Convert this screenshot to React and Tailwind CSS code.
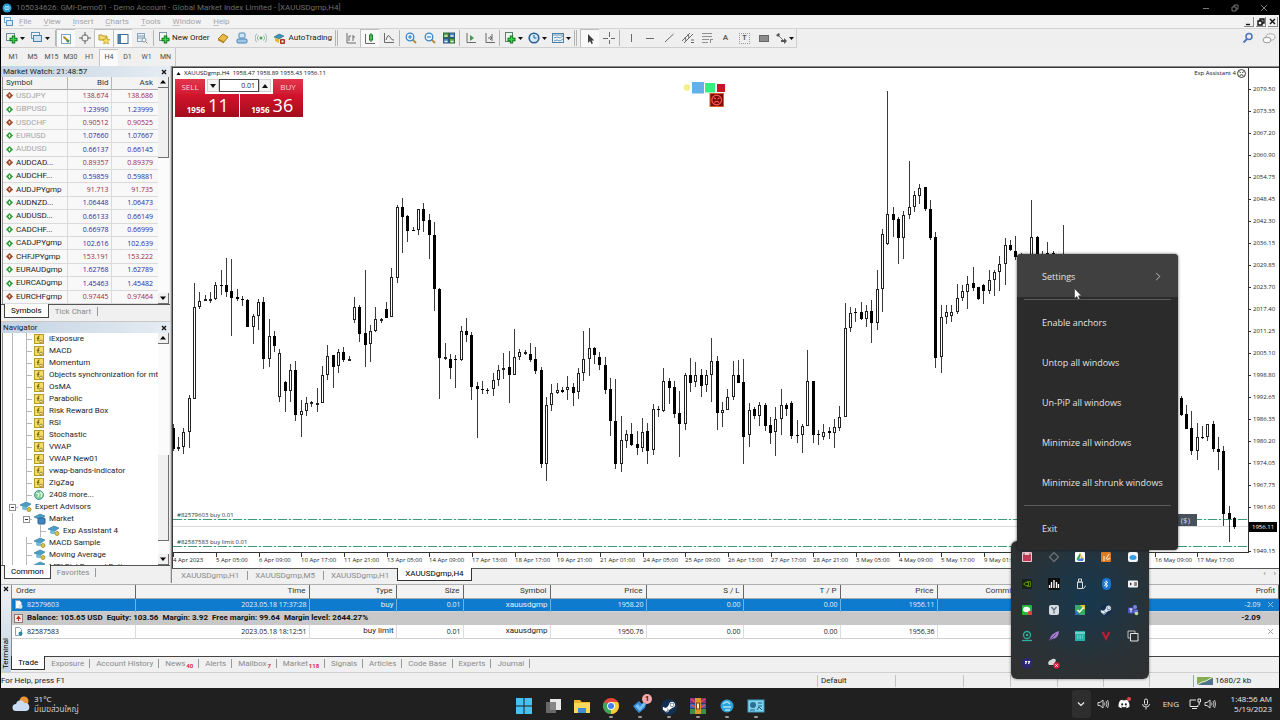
import React from "react";
import { FaDiscord, FaSteamSymbol, FaBluetoothB } from "react-icons/fa6";

/* ---------- chart data ---------- */

// [filled, high, body top, body bottom, low] in thirds of a pixel below each series' base
const SERIES = [
  {
    first: 0,
    base: 540,
    bars: [
      [1, 733, 745, 808, 812], [0, 772, 800, 808, 812], [0, 743, 757, 801, 821], [0, 646, 655, 757, 804],
      [0, 308, 381, 657, 657], [0, 336, 363, 382, 386], [0, 345, 356, 361, 364], [0, 336, 356, 361, 369],
      [0, 307, 316, 358, 360], [1, 271, 315, 317, 345], [1, 234, 315, 335, 350], [1, 238, 334, 353, 468],
      [1, 326, 351, 356, 362], [1, 348, 358, 361, 378], [1, 357, 360, 442, 442], [0, 402, 409, 440, 493],
      [0, 358, 367, 409, 450], [1, 351, 367, 537, 567], [0, 416, 469, 537, 562], [1, 453, 469, 497, 515],
      [0, 507, 519, 652, 665], [1, 604, 606, 633, 695], [0, 553, 569, 633, 665], [1, 542, 569, 704, 723],
      [0, 661, 692, 704, 771], [0, 650, 669, 693, 708], [0, 664, 667, 672, 680], [0, 624, 669, 673, 695],
      [0, 558, 585, 668, 670], [0, 496, 527, 586, 600], [1, 524, 526, 561, 624], [0, 506, 517, 559, 578],
      [1, 502, 516, 540, 545], [0, 529, 536, 542, 544], [0, 350, 381, 419, 429], [1, 374, 381, 461, 486],
      [1, 271, 460, 494, 562], [0, 434, 454, 493, 545], [0, 381, 416, 454, 456], [0, 413, 416, 421, 428],
      [1, 367, 387, 413, 414], [0, 263, 292, 412, 412], [0, 74, 81, 293, 309], [1, 55, 80, 111, 218],
      [1, 105, 108, 152, 186], [1, 142, 149, 152, 152], [0, 86, 88, 151, 166], [1, 69, 87, 122, 155],
      [1, 102, 120, 165, 237], [1, 126, 164, 326, 393], [1, 325, 326, 533, 656], [0, 490, 531, 535, 540],
      [1, 523, 537, 564, 596], [1, 524, 537, 541, 624], [0, 438, 454, 541, 543], [1, 414, 454, 465, 487],
      [1, 457, 464, 620, 659], [1, 606, 618, 626, 775], [1, 604, 627, 629, 641], [1, 625, 629, 633, 641],
      [0, 580, 601, 628, 647], [0, 556, 569, 601, 617], [0, 519, 563, 569, 597], [1, 512, 561, 586, 668],
      [0, 448, 532, 586, 586], [0, 506, 517, 532, 540], [0, 510, 517, 522, 526], [1, 488, 522, 540, 545],
      [1, 502, 538, 572, 582], [1, 560, 570, 852, 865], [0, 650, 676, 851, 904], [0, 613, 640, 676, 694],
      [0, 608, 630, 639, 643], [1, 620, 631, 635, 640],
    ],
  },
  {
    first: 74,
    base: 900,
    bars: [
      [0, 228, 261, 271, 299], [1, 249, 261, 278, 318], [0, 203, 220, 277, 297], [0, 94, 177, 220, 243],
      [0, 83, 145, 177, 228], [1, 142, 144, 165, 191], [1, 155, 171, 194, 210], [1, 170, 194, 269, 281],
      [1, 234, 267, 363, 407], [1, 236, 362, 491, 508], [0, 348, 421, 493, 517], [0, 390, 401, 422, 443],
      [1, 370, 402, 435, 437], [1, 394, 432, 443, 465], [0, 353, 395, 443, 455], [1, 370, 394, 452, 491],
      [0, 312, 328, 451, 465], [1, 318, 327, 330, 350], [0, 204, 244, 333, 336], [1, 234, 243, 263, 313],
      [1, 243, 262, 341, 353], [1, 272, 340, 371, 470], [0, 220, 226, 371, 391], [1, 174, 225, 248, 275],
      [0, 186, 226, 247, 260], [1, 207, 225, 258, 290], [0, 211, 226, 256, 275], [0, 114, 184, 226, 307],
      [1, 169, 182, 340, 391], [0, 305, 331, 340, 381], [0, 266, 292, 331, 331], [0, 183, 226, 292, 299],
      [1, 180, 225, 248, 249], [1, 178, 247, 410, 491], [0, 308, 331, 406, 441], [1, 322, 328, 348, 356],
      [0, 306, 316, 349, 377], [1, 308, 316, 378, 392], [1, 350, 376, 398, 431], [0, 320, 356, 397, 469],
      [0, 268, 315, 358, 405], [1, 308, 314, 327, 349], [1, 303, 309, 407, 417], [1, 360, 406, 407, 430],
      [0, 373, 379, 406, 460], [0, 150, 244, 379, 379], [1, 243, 244, 405, 430], [1, 391, 402, 405, 435],
      [0, 371, 395, 412, 420], [1, 381, 393, 399, 416], [0, 358, 382, 398, 445], [0, 318, 352, 385, 392],
      [0, 8, 85, 352, 352],
    ],
  },
  {
    first: 127,
    base: 240,
    bars: [
      [0, 680, 700, 745, 755], [1, 684, 696, 699, 725], [1, 667, 696, 717, 719], [0, 676, 694, 717, 741],
      [1, 661, 694, 729, 789], [0, 570, 626, 730, 749], [0, 446, 463, 626, 696], [0, 34, 403, 493, 495],
      [1, 380, 403, 419, 470], [1, 411, 417, 473, 553], [0, 392, 405, 473, 537], [0, 242, 382, 405, 418],
      [0, 334, 344, 382, 397], [0, 312, 323, 349, 371], [1, 321, 322, 387, 392], [1, 360, 386, 474, 479],
      [1, 456, 472, 833, 864], [0, 674, 712, 832, 880], [0, 674, 697, 710, 731], [0, 676, 695, 707, 725],
      [0, 612, 653, 695, 703], [0, 615, 634, 653, 663], [0, 588, 611, 635, 686], [1, 562, 610, 624, 633],
      [1, 620, 622, 656, 661], [1, 613, 614, 633, 671], [0, 570, 599, 634, 643], [0, 571, 575, 599, 648],
      [0, 528, 553, 575, 632], [0, 473, 496, 553, 616], [1, 480, 496, 509, 514], [1, 467, 513, 530, 540],
      [1, 518, 525, 560, 560], [0, 530, 540, 560, 560], [0, 361, 471, 560, 560], [1, 469, 470, 560, 560],
      [1, 514, 530, 560, 560], [1, 487, 519, 560, 560], [1, 513, 519, 560, 560], [1, 530, 540, 560, 560],
      [1, 435, 540, 560, 560],
    ],
  },
  {
    first: 189,
    base: 720,
    bars: [
      [1, 468, 474, 524, 527], [1, 495, 523, 566, 567], [1, 513, 564, 633, 645], [0, 550, 592, 633, 661],
      [1, 558, 590, 592, 597], [0, 552, 553, 592, 604], [1, 544, 552, 627, 635], [1, 590, 626, 636, 691],
      [1, 618, 634, 822, 858], [1, 799, 819, 838, 906], [1, 830, 835, 861, 868],
    ],
  },
];

const PRICES = [
  "2079.50", "2073.35", "2067.20", "2060.90", "2054.75", "2048.45", "2042.30", "2036.15", "2029.85", "2023.70", "2017.40",
  "2011.25", "2005.10", "1998.80", "1992.65", "1986.35", "1980.20", "1974.05", "1967.75", "1961.60", "", "1949.15",
];

const DATES = [
  "4 Apr 2023", "5 Apr 05:00", "6 Apr 09:00", "10 Apr 17:00", "11 Apr 21:00", "13 Apr 05:00", "14 Apr 09:00", "17 Apr 13:00",
  "18 Apr 17:00", "19 Apr 21:00", "21 Apr 01:00", "24 Apr 05:00", "25 Apr 09:00", "26 Apr 13:00", "27 Apr 17:00", "28 Apr 21:00",
  "3 May 05:00", "4 May 09:00", "5 May 17:00", "9 May 01:00", "10 May 05:00", "11 May 09:00", "12 May 13:00", "16 May 09:00",
  "17 May 17:00",
];

const QUOTES = [
  ["USDJPY", "138.674", "138.686", 0, 1], ["GBPUSD", "1.23990", "1.23999", 1, 1], ["USDCHF", "0.90512", "0.90525", 0, 1],
  ["EURUSD", "1.07660", "1.07667", 1, 1], ["AUDUSD", "0.66137", "0.66145", 1, 1], ["AUDCAD...", "0.89357", "0.89379", 0, 0],
  ["AUDCHF...", "0.59859", "0.59881", 1, 0], ["AUDJPYgmp", "91.713", "91.735", 0, 0], ["AUDNZD...", "1.06448", "1.06473", 1, 0],
  ["AUDUSD...", "0.66133", "0.66149", 1, 0], ["CADCHF...", "0.66978", "0.66999", 1, 0], ["CADJPYgmp", "102.616", "102.639", 1, 0],
  ["CHFJPYgmp", "153.191", "153.222", 0, 0], ["EURAUDgmp", "1.62768", "1.62789", 1, 0], ["EURCADgmp", "1.45463", "1.45482", 1, 0],
  ["EURCHFgmp", "0.97445", "0.97464", 0, 0],
];

const INDICATORS = [
  "iExposure", "MACD", "Momentum", "Objects synchronization for mt4", "OsMA", "Parabolic", "Risk Reward Box", "RSI",
  "Stochastic", "VWAP", "VWAP New01", "vwap-bands-indicator", "ZigZag",
];

/* ---------- small shared pieces ---------- */

function Svg({ s = 12, className = "", children }) {
  return (
    <svg viewBox={`0 0 ${s} ${s}`} width={s} height={s} className={`shrink-0 ${className}`} aria-hidden="true">
      {children}
    </svg>
  );
}

const Plus = ({ x, y }) => (
  <g>
    <path d={`M${x} ${y - 4}v8M${x - 4} ${y}h8`} stroke="#0c7a18" strokeWidth="3.400" />
    <path d={`M${x} ${y - 3}v6M${x - 3} ${y}h6`} stroke="#3fd04a" strokeWidth="1.600" />
  </g>
);

const Magnifier = ({ sign, color = "#3b86c4" }) => (
  <Svg s={12}>
    <path d="M7.5 7.5L11 11" stroke="#b98b3c" strokeWidth="2" />
    <circle cx="5" cy="5" r="3.8" fill="#eaf4fc" stroke={color} strokeWidth="1.3" />
    {sign && <path d={sign} stroke={color} strokeWidth="1.2" />}
  </Svg>
);

function Tool({ label, pressed, children }) {
  return (
    <button
      type="button"
      aria-label={label}
      className={`flex h-[18px] w-[19px] shrink-0 items-center justify-center ${pressed ? "border-l border-t border-[#c0c0c0] bg-[#f9f9f9]" : ""}`}
    >
      {children}
    </button>
  );
}

function Combo({ label, children }) {
  return (
    <button type="button" aria-label={label} className="flex h-[18px] w-[21px] shrink-0 items-center justify-between pl-[2px]">
      {children}
      <svg viewBox="0 0 5 3" className="h-[3px] w-[5px]" aria-hidden="true">
        <path d="M0 0h5L2.5 3z" fill="#111" />
      </svg>
    </button>
  );
}

const Sep = ({ className = "mx-px" }) => <span className={`h-4 w-px shrink-0 bg-[#b4b4b4] ${className}`} />;
const Grip = () => <span className="mx-[3px] h-4 w-[3px] shrink-0 border-x border-[#b4b4b4]" />;

const CloseX = ({ label }) => (
  <button type="button" aria-label={label} className="flex h-2 w-2 items-center justify-center">
    <svg viewBox="0 0 6 6" className="h-[6px] w-[6px]" aria-hidden="true">
      <path d="M1 1l4 4M5 1L1 5" stroke="#111" strokeWidth="1.3" />
    </svg>
  </button>
);

function PanelTitle({ children }) {
  return (
    <div className="flex h-[11px] items-center justify-between bg-gradient-to-r from-[#c3d3e3] to-[#e6ecf2] pl-[2px] pr-[2px] text-[8px] leading-none text-[#222]">
      <h2>{children}</h2>
      <CloseX label="Close" />
    </div>
  );
}

const ArrowBtn = ({ up }) => (
  <button
    type="button"
    aria-label={up ? "Scroll up" : "Scroll down"}
    className="flex h-[11px] w-full shrink-0 items-center justify-center border-b border-r border-[#707070] bg-[#f0f0f0]"
  >
    <svg viewBox="0 0 6 4" className="h-[4px] w-[6px]" aria-hidden="true">
      <path d={up ? "M0 3.500L3 0l3 3.500z" : "M0 .5h6L3 4z"} fill="#000" />
    </svg>
  </button>
);

function PanelTabs({ active, other }) {
  return (
    <div className="flex h-[15px] items-start border-t border-[#555] bg-[#f0f0f0] pl-[3px] text-[8px]">
      <button type="button" className="-mt-px h-[14px] border-x border-b border-[#444] bg-white px-[6px] leading-[12px] text-black">
        {active}
      </button>
      <button type="button" className="mt-[2px] border-r border-[#999] px-[6px] leading-[9px] text-[#8a8a8a]">
        {other}
      </button>
    </div>
  );
}

/* ---------- top chrome ---------- */

function TitleBar() {
  return (
    <header className="flex h-[15px] items-center bg-black pl-[1px] text-[8px] text-[#6d6d6d]">
      <Svg s={10} className="mr-[4px]">
        <circle cx="5" cy="5" r="4.500" fill="#2a9fd6" />
        <path d="M2 5h6M3 3.500h4M3 6.500h4" stroke="#9edcf7" />
      </Svg>
      <h1 className="flex-1 leading-none">105034626: GMI-Demo01 - Demo Account - Global Market Index Limited - [XAUUSDgmp,H4]</h1>
      <div className="flex gap-[19px] pr-[10px]">
        {["M2 5.500h6", "M2 4h4v4H2zM4 4V2h4v4H6", "M2 2l6 6M8 2L2 8"].map((d, i) => (
          <button key={d} type="button" aria-label={["Minimize", "Restore", "Close"][i]} className="flex">
            <Svg s={10}>
              <path d={d} fill="none" stroke="#777" strokeWidth="1" />
            </Svg>
          </button>
        ))}
      </div>
    </header>
  );
}

function MenuBar() {
  return (
    <nav className="flex h-[14px] items-center border-b border-[#d4d4d4] bg-[#f3f3f3] pl-[2px] pr-px text-[8px] text-[#a4a4a4]">
      <Svg s={11} className="mr-[5px]">
        <rect x="1.500" y="1.500" width="6" height="5" fill="#fff" stroke="#7aa7cc" />
        <rect x="3.500" y="4.500" width="6" height="5" fill="#dcebf7" stroke="#5c92bf" />
      </Svg>
      <div className="flex flex-1 gap-3">
        {["File", "View", "Insert", "Charts", "Tools", "Window", "Help"].map((m) => (
          <button key={m} type="button" className="leading-none">
            <span className="underline decoration-[#c4c4c4]">{m[0]}</span>
            {m.slice(1)}
          </button>
        ))}
      </div>
      <div className="flex gap-[2px]">
        {["M2 7.500h4", "M2 4h4v4H2zM4 4V2h4v4H6", "M2 2l5 5M7 2L2 7"].map((d, i) => (
          <button
            key={d}
            type="button"
            aria-label={["Minimize chart", "Restore chart", "Close chart"][i]}
            className="flex h-[10px] w-[10px] items-center justify-center border-b border-r border-[#888] bg-[#f0f0f0]"
          >
            <Svg s={9}>
              <path d={d} fill="none" stroke="#111" strokeWidth="1.400" />
            </Svg>
          </button>
        ))}
      </div>
    </nav>
  );
}

const G = "#6a6a6a";
const Line = ({ d, c = G, w = 1 }) => (
  <Svg>
    <path d={d} fill="none" stroke={c} strokeWidth={w} />
  </Svg>
);

function Toolbar() {
  return (
    <div className="flex h-[19px] items-center bg-[#efefef] text-[8px] text-[#1c1c1c]">
      <div className="flex h-full items-center border-b border-r border-[#cfcfcf] pl-[3px] pr-[2px]">
        <Combo label="New chart">
          <Svg>
            <rect x="0.500" y="1.500" width="8" height="7" fill="#eef6ee" stroke="#6c8aa0" />
            <Plus x={7.5} y={7.5} />
          </Svg>
        </Combo>
        <span className="w-1" />
        <Combo label="Profiles">
          <Svg>
            <rect x="0.500" y="0.500" width="8" height="6" fill="#eaf3fa" stroke="#6b93b3" />
            <rect x="2.500" y="3.500" width="8" height="6" fill="#cfe2f1" stroke="#4f7fa6" />
          </Svg>
        </Combo>
        <Sep className="ml-[5px]" />
        <Tool label="Market Watch" pressed>
          <Svg>
            <rect x="1.500" y="1.500" width="9" height="9" fill="#fff" stroke="#7ba3c3" />
            <path d="M3 3l3 2-2 1z" fill="#2f9b38" />
            <path d="M4 4l4 4" stroke="#b98b1c" strokeWidth="2" />
            <circle cx="8" cy="8" r="1.500" fill="#3a8f3f" />
          </Svg>
        </Tool>
        <Tool label="Data Window">
          <Svg>
            <circle cx="6" cy="6" r="3.300" fill="none" stroke="#777" />
            <path d="M6 0v4M6 8v4M0 6h4M8 6h4" stroke="#666" />
          </Svg>
        </Tool>
        <Tool label="Navigator" pressed>
          <Svg>
            <path d="M1 2h3l1 1h4v4H1z" fill="#f1dd72" stroke="#b99a2b" />
            <path d="M8 4l1.200 2.300 2.600.3-1.900 1.800.5 2.600L8 9.800 5.700 11l.5-2.600-1.900-1.800 2.600-.3z" fill="#f7e25a" stroke="#b8962a" strokeWidth=".7" />
          </Svg>
        </Tool>
        <Tool label="Terminal" pressed>
          <Svg>
            <rect x="1" y="1.500" width="10" height="9" fill="#fff" stroke="#3f6d96" />
            <rect x="1" y="2" width="3" height="8" fill="#4d7fae" />
          </Svg>
        </Tool>
        <Tool label="Strategy Tester">
          <Svg>
            <rect x="1.500" y="1.500" width="7" height="8" fill="#eef4f8" stroke="#8aa6bc" />
            <path d="M3 3v4M5 3v4M7 3v3" stroke="#7c99b0" />
            <circle cx="8" cy="8" r="2" fill="#fff" stroke="#7895ab" />
            <path d="M9.500 9.500L11.500 11.500" stroke="#b98b3c" />
          </Svg>
        </Tool>
        <Sep className="ml-[2px] mr-1" />
        <button type="button" className="flex items-center whitespace-nowrap leading-none">
          <Svg>
            <rect x="1.500" y="0.500" width="7" height="8" fill="#f7fbf7" stroke="#7d97a8" />
            <Plus x={7.5} y={7.5} />
          </Svg>
          <span className="pl-[2px]">New Order</span>
        </button>
        <span className="w-1" />
        <Tool label="MetaEditor">
          <Svg>
            <path d="M1 7l5-5 5 3-4 5z" fill="#e8bb45" stroke="#a87a15" />
            <path d="M1 7l6 3v1.500L1 8.500z" fill="#b88720" />
          </Svg>
        </Tool>
        <Tool label="Market">
          <Svg>
            <rect x="3" y="1" width="6" height="5" rx="1" fill="#cfe5f5" stroke="#4a88b9" />
            <rect x="1" y="7" width="10" height="4" rx="1" fill="#9dc7e5" stroke="#4a88b9" />
          </Svg>
        </Tool>
        <Tool label="Signals">
          <Svg>
            <circle cx="6" cy="6" r="1.500" fill="#49a957" />
            <path d="M3.500 3.500a3.600 3.600 0 000 5M8.500 3.500a3.600 3.600 0 010 5M1.800 1.800a6 6 0 000 8.400M10.200 1.800a6 6 0 010 8.400" fill="none" stroke="#8fb7a5" />
          </Svg>
        </Tool>
        <button type="button" className="ml-[2px] flex items-center whitespace-nowrap leading-none">
          <Svg s={13}>
            <path d="M1 5l5-3 5 2-5 3z" fill="#3e93b5" stroke="#246a86" strokeWidth=".6" />
            <path d="M2 6v3l4 2V7z" fill="#e4b53e" />
            <rect x="7" y="7" width="5" height="5" rx="1" fill="#b3301f" />
            <rect x="8.500" y="8.500" width="2" height="2" fill="#fff" />
          </Svg>
          <span className="pl-[3px]">AutoTrading</span>
        </button>
        <Grip />
        <Tool label="Bar chart"><Line d="M2 1v10h9M4 9V4M4 4h2M8 9V3M8 5h2" /></Tool>
        <Tool label="Candlesticks" pressed>
          <Svg>
            <path d="M1.500 1v9.500H11" fill="none" stroke={G} />
            <path d="M7 0v9" stroke="#13852a" />
            <rect x="5.500" y="2" width="3" height="5" fill="#4fc25c" stroke="#13852a" />
          </Svg>
        </Tool>
        <Tool label="Line chart"><Line d="M1.500 1v9.500H11M3 8q2-7 4-3t4 3" /></Tool>
        <Sep />
        <Tool label="Zoom in"><Magnifier sign="M3 5h4M5 3v4" /></Tool>
        <Tool label="Zoom out"><Magnifier sign="M3 5h4" /></Tool>
        <Tool label="Tile windows">
          <Svg>
            <rect x="0.500" y="1" width="5" height="4.500" fill="#55a84f" stroke="#2f6a3b" />
            <rect x="6.500" y="1" width="5" height="4.500" fill="#4a86bd" stroke="#2e5c86" />
            <rect x="0.500" y="6.500" width="5" height="4.500" fill="#4a86bd" stroke="#2e5c86" />
            <rect x="6.500" y="6.500" width="5" height="4.500" fill="#55a84f" stroke="#2f6a3b" />
            <path d="M1.500 4h3M7.500 4h3M1.500 9.500h3M7.500 9.500h3" stroke="#e6f2e6" strokeWidth="1.500" />
          </Svg>
        </Tool>
        <Sep />
        <Tool label="Auto scroll">
          <Svg>
            <path d="M2 1v9.500h9" fill="none" stroke={G} />
            <path d="M5 3l4 3-4 3z" fill="#3c9a48" />
          </Svg>
        </Tool>
        <Tool label="Chart shift"><Line d="M2 1v9.500h9M8 2v7M4 6h4M6 4l2 2-2 2" /></Tool>
        <Sep className="mr-[2px]" />
        <Combo label="Indicators">
          <Svg>
            <rect x="1.500" y="0.500" width="7" height="9" fill="#eef6ee" stroke="#58806a" />
            <Plus x={7.5} y={7.5} />
          </Svg>
        </Combo>
        <span className="w-[3px]" />
        <Combo label="Periods">
          <Svg>
            <circle cx="6" cy="6" r="4.800" fill="#d5e9f7" stroke="#245f96" strokeWidth="1.600" />
            <path d="M6 3v3h2.500" fill="none" stroke="#245f96" />
          </Svg>
        </Combo>
        <span className="w-[3px]" />
        <Combo label="Templates">
          <Svg>
            <rect x="0.500" y="1.500" width="11" height="9" fill="#eaf3fa" stroke="#4f7fa6" />
            <path d="M1 3h10M2 6l3-1 3 1 3-2M2 9l3-1 3 1 3-2" fill="none" stroke="#6f98b8" />
          </Svg>
        </Combo>
        <Grip />
        <Tool label="Cursor" pressed>
          <Svg>
            <path d="M4 1v9l2-2 1.500 3 1.500-.7L7.600 7.500h2.700z" fill="#3f3f3f" />
          </Svg>
        </Tool>
        <Tool label="Crosshair"><Line d="M6.500 0v5M6.500 8v5M0 6.500h5M8 6.500h5" /></Tool>
        <Sep />
        <Tool label="Vertical line"><Line d="M6.500 2v8" /></Tool>
        <Tool label="Horizontal line"><Line d="M2 6.500h8" /></Tool>
        <Tool label="Trendline"><Line d="M2 10L10.500 2" /></Tool>
        <Tool label="Equidistant channel"><Line d="M0 9l8-8M2 11l9-9M3 5l1 4M6 2l1 4M9 8h3M9 10.500h3" /></Tool>
        <Tool label="Fibonacci"><Line d="M1 1.500h10M1 4.500h10M1 7.500h7M1 10.500h6M9.500 7v4M9 7.500h3" c="#909090" /></Tool>
        <Tool label="Text"><span className="font-bold text-[#666]">A</span></Tool>
        <Tool label="Text label">
          <span className="border border-dotted border-[#999] px-[2px] text-[7px] font-bold leading-[9px] text-[#555]">T</span>
        </Tool>
        <Tool label="Rectangle">
          <Svg>
            <rect x="1.500" y="3.500" width="9" height="6" fill="#8b8b8b" stroke="#666" />
          </Svg>
        </Tool>
        <Combo label="Arrows">
          <Svg>
            <path d="M1 3l3-2 1 2-2 2zM6 8h3V6l3 3-3 3v-2H6z" fill="#555" />
            <path d="M4 4l4 4" stroke="#777" />
          </Svg>
        </Combo>
      </div>
      <div className="ml-auto flex gap-2 pr-[3px]">
        <button type="button" aria-label="Search" className="flex">
          <Svg>
            <circle cx="7" cy="4.500" r="3" fill="none" stroke="#4a76b8" strokeWidth="1.500" />
            <path d="M5 7L1.500 10.500" stroke="#4a76b8" strokeWidth="1.800" />
          </Svg>
        </button>
        <button type="button" aria-label="Community" className="flex">
          <Svg s={14}>
            <ellipse cx="8.500" cy="5" rx="4.500" ry="3.200" fill="#f4f4f4" stroke="#aaa" />
            <ellipse cx="5" cy="8" rx="4" ry="2.800" fill="#fafafa" stroke="#999" />
          </Svg>
        </button>
      </div>
    </div>
  );
}

function Timeframes() {
  return (
    <div className="flex h-[18px] items-center bg-[#f0f0f0]">
      <div className="flex h-full items-center border-r border-[#c8c8c8] pl-[3px] text-[7px] text-[#4c4c4c]">
        {["M1", "M5", "M15", "M30", "H1", "H4", "D1", "W1", "MN"].map((t) => (
          <button
            key={t}
            type="button"
            className={`h-[17px] w-[19px] ${t === "H4" ? "border-l border-t border-[#c4c4c4] bg-[#fafafa]" : ""}`}
          >
            {t}
          </button>
        ))}
      </div>
    </div>
  );
}

/* ---------- left column ---------- */

const NUM = "font-['Open_Sans',sans-serif] text-[7px]";

function MarketWatch() {
  return (
    <section className="flex flex-col">
      <PanelTitle>Market Watch: 21:48:57</PanelTitle>
      <div className="mx-px flex h-[227px] border-l border-[#8a8a8a] bg-[#f8f8f8]">
        <table className="h-[227px] flex-1 table-fixed border-collapse text-[8px] leading-none">
          <colgroup>
            <col className="w-[64px]" />
            <col className="w-[44px]" />
            <col />
          </colgroup>
          <thead>
            <tr className="h-[12px] border-b border-[#aaa] bg-[#f3f3f3] text-[#333]">
              <th className="border-r border-[#b5b5b5] pl-[3px] text-left font-normal">Symbol</th>
              <th className="border-r border-[#b5b5b5] pr-[2px] text-right font-normal">Bid</th>
              <th className="pr-[5px] text-right font-normal">Ask</th>
            </tr>
          </thead>
          <tbody>
            {QUOTES.map(([name, bid, ask, up, dim]) => (
              <tr key={name} className="border-b border-[#dadada]">
                <td className={`border-r border-[#dadada] pl-[3px] ${dim ? "text-[#a6a6a6]" : "text-[#1e1e1e]"}`}>
                  <span className="flex items-center gap-[3px]">
                    <Svg s={7}>
                      <path d="M3.500 0L7 3.500 3.500 7 0 3.500z" fill={up ? "#2f9b3c" : "#9c4026"} />
                      <path d={up ? "M3.500 2v3M2.500 3.500h2" : "M2.500 3h2M3.500 2.500v2"} stroke="#f3efe4" strokeWidth=".9" />
                    </Svg>
                    {name}
                  </span>
                </td>
                <td className={`border-r border-[#dadada] pr-[2px] text-right ${NUM} ${up ? "text-[#2b2b9c]" : "text-[#a02a40]"}`}>{bid}</td>
                <td className={`pr-[5px] text-right ${NUM} ${up ? "text-[#2b2b9c]" : "text-[#a02a40]"}`}>{ask}</td>
              </tr>
            ))}
          </tbody>
        </table>
        <div className="flex w-[11px] flex-col bg-[#fbfbfb]">
          <ArrowBtn up />
          <div className="h-[70px] border-b border-r border-[#707070] bg-[#f0f0f0]" />
          <div className="flex-1" />
          <ArrowBtn />
        </div>
      </div>
      <PanelTabs active="Symbols" other="Tick Chart" />
    </section>
  );
}

const IndicatorIcon = () => (
  <Svg s={10}>
    <rect x="0.500" y="0.500" width="9" height="9" fill="#f3dd62" stroke="#b79a2e" />
    <path d="M5.500 2Q4 1.500 4 4v3M2.800 4.300h2.600" fill="none" stroke="#6b5510" />
    <circle cx="7" cy="7.500" r="1.400" fill="#f8efb5" stroke="#8d7722" strokeWidth=".8" />
  </Svg>
);

const ExpertIcon = () => (
  <Svg s={12}>
    <path d="M0 4l6-3 5 2-5 3.500z" fill="#4b9fc4" stroke="#2b6f93" strokeWidth=".6" />
    <path d="M2 5.500V8q2 2 5 .5V6z" fill="#74bcd9" />
    <circle cx="9" cy="8.500" r="2" fill="#e2c33f" stroke="#8b8a28" strokeWidth=".8" />
  </Svg>
);

function Branch({ depth, box, children }) {
  return (
    <li className="flex h-3 items-center whitespace-nowrap pl-[4px] leading-none">
      {depth > 0 && (
        <span className="flex h-full w-[14px] shrink-0 pl-[5px]">
          <span className="h-full w-px bg-[#b8b8b8]" />
        </span>
      )}
      {depth > 1 && <span className="w-[14px] shrink-0" />}
      {box ? (
        <span className="mr-[2px] flex h-[7px] w-[11px] shrink-0 items-center">
          <span className="ml-[2px] flex h-[7px] w-[7px] shrink-0 items-center border border-[#909090] bg-white px-px">
            <span className="h-px w-full bg-[#333]" />
          </span>
          <span className="h-px flex-1 bg-[#b8b8b8]" />
        </span>
      ) : (
        <span className="mr-[2px] flex h-full w-[11px] shrink-0 items-center pl-[5px]">
          <span className="h-full w-px bg-[#b8b8b8]" />
          <span className="h-px flex-1 bg-[#b8b8b8]" />
        </span>
      )}
      {children}
    </li>
  );
}

function Navigator() {
  return (
    <section className="mt-[2px] flex flex-col border-t border-[#c8c8c8]">
      <PanelTitle>Navigator</PanelTitle>
      <div className="mx-px flex h-[232px] border-l border-[#8a8a8a] bg-white">
        <ul className="min-w-0 flex-1 overflow-hidden text-[8px] text-[#1e1e1e]">
          {INDICATORS.map((n) => (
            <Branch key={n} depth={1}>
              <IndicatorIcon />
              <span className="pl-[5px]">{n}</span>
            </Branch>
          ))}
          <Branch depth={1}>
            <Svg s={10}>
              <circle cx="5" cy="5" r="4.500" fill="#7ccf8c" stroke="#4a93b0" />
              <path d="M2 3l3 1-1 3M6 2l2 2-1 3" fill="none" stroke="#eafbe9" strokeWidth="1.300" />
            </Svg>
            <span className="pl-[5px]">2408 more...</span>
          </Branch>
          <Branch depth={0} box>
            <ExpertIcon />
            <span className="pl-[3px]">Expert Advisors</span>
          </Branch>
          <Branch depth={1} box>
            <Svg s={12}>
              <path d="M0 4l6-3 5 2-5 3.500z" fill="#4b9fc4" stroke="#2b6f93" strokeWidth=".6" />
              <rect x="4" y="5" width="7" height="6" rx="1" fill="#3d86c6" stroke="#2b6394" />
            </Svg>
            <span className="pl-[3px]">Market</span>
          </Branch>
          <Branch depth={2}>
            <ExpertIcon />
            <span className="pl-[3px]">Exp Assistant 4</span>
          </Branch>
          <Branch depth={1}>
            <ExpertIcon />
            <span className="pl-[3px]">MACD Sample</span>
          </Branch>
          <Branch depth={1}>
            <ExpertIcon />
            <span className="pl-[3px]">Moving Average</span>
          </Branch>
          <Branch depth={1}>
            <ExpertIcon />
            <span className="pl-[3px]">MTI RiskReward Ratio</span>
          </Branch>
        </ul>
        <div className="flex w-[11px] flex-col bg-[#fbfbfb]">
          <ArrowBtn up />
          <div className="flex-1" />
          <div className="h-[86px] border-b border-r border-[#707070] bg-[#f0f0f0]" />
          <div className="h-[13px]" />
          <ArrowBtn />
        </div>
      </div>
      <PanelTabs active="Common" other="Favorites" />
    </section>
  );
}

/* ---------- chart ---------- */

function Candles() {
  return SERIES.flatMap(({ first, base, bars }) =>
    bars.map(([filled, hi, top, bot, lo], i) => {
      const n = first + i;
      const x = 170 + Math.floor((9 + 16 * n) / 3);
      const y = (v) => Math.round((base + v) / 3);
      const h = Math.max(1, y(bot) - y(top));
      return (
        <g key={n}>
          <rect x={x} y={y(hi)} width="1" height={Math.max(1, y(lo) - y(hi))} fill="#3c3c3c" />
          {filled ? (
            <rect x={x - 1} y={y(top)} width="3" height={h} fill="#000" />
          ) : (
            <rect x={x - 0.5} y={y(top) + 0.5} width="2" height={Math.max(1, h - 1)} fill="#fff" stroke="#222" />
          )}
        </g>
      );
    })
  );
}

function QuotePanel() {
  const half = "flex flex-1 items-end justify-center gap-[3px] bg-gradient-to-b from-[#d3142c] to-[#a30d1d] pb-[3px] pl-[2px]";
  return (
    <div className="absolute left-[2px] top-[11px] flex w-[128px] flex-col text-white">
      <div className="flex h-[15px] items-stretch bg-white text-[8px]">
        <button type="button" className="w-[30px] bg-gradient-to-b from-[#e2364a] to-[#cf1c33] leading-none text-[#fbd5d9]">SELL</button>
        <button type="button" aria-label="Decrease volume" className="ml-[2px] flex h-[13px] w-3 items-center justify-center border border-[#cfcfcf] bg-[#f4f4f4]">
          <svg viewBox="0 0 6 4" className="h-1 w-[6px]"><path d="M0 0h6L3 4z" fill="#111" /></svg>
        </button>
        <input
          aria-label="Volume"
          defaultValue="0.01"
          className="h-[13px] w-10 min-w-0 border border-[#444] bg-white pr-[3px] text-right text-[7px] text-[#222] outline-none"
        />
        <button type="button" aria-label="Increase volume" className="flex h-[13px] w-3 items-center justify-center border border-[#cfcfcf] bg-[#f4f4f4]">
          <svg viewBox="0 0 6 4" className="h-1 w-[6px]"><path d="M0 4h6L3 0z" fill="#111" /></svg>
        </button>
        <button type="button" className="ml-[2px] flex-1 bg-gradient-to-b from-[#e2364a] to-[#cf1c33] leading-none text-[#fbd5d9]">BUY</button>
      </div>
      <div className="flex h-[23px] gap-px">
        <div className={half}>
          <span className="text-[8px] font-bold leading-none">1956</span>
          <span className="text-[18px] leading-[17px]">11</span>
        </div>
        <div className={half}>
          <span className="text-[8px] font-bold leading-none">1956</span>
          <span className="text-[18px] leading-[17px]">36</span>
        </div>
      </div>
    </div>
  );
}

const SadFace = ({ c }) => (
  <g fill="none" stroke={c}>
    <circle cx="5" cy="5" r="4.400" />
    <path d="M2.800 7.500q2.200-2.500 4.400 0M2.500 3l1.700 1.200M7.500 3L5.800 4.200" />
  </g>
);

function Chart() {
  return (
    <section className="flex min-w-0 flex-1 flex-col border-l border-t border-[#8a8a8a]">
      <div className="flex border-l border-t border-[#3a3a3a] bg-white font-['Open_Sans',sans-serif]">
        <div className="min-w-0 flex-1">
          <div className="relative border-b border-r border-[#333]">
            <svg viewBox="173 68 1075 484" preserveAspectRatio="xMaxYMin slice" className="block h-[484px] w-full" role="img" aria-label="XAUUSDgmp H4 candlestick chart">
              <path d="M173 526.500H1248" stroke="#d9d9d9" />
              <path d="M173 519.500H1248M173 546.500H1248" stroke="#d3ede2" />
              <path d="M173 519.500H1248M173 546.500H1248" stroke="#3f9a78" strokeDasharray="9 2 2 2" />
              <Candles />
              <circle cx="687" cy="87.500" r="3.300" fill="#f3f08a" />
              <rect x="692" y="82" width="12" height="11.500" fill="#66b0ea" />
              <rect x="705" y="83" width="10" height="9.500" fill="#37ee7e" />
              <rect x="717" y="84" width="8" height="8" fill="#c9152c" />
              <rect x="710" y="93.500" width="13.500" height="13" fill="#7d0d0d" stroke="#d8602e" />
              <g transform="translate(711.200 94.500) scale(1.1)">
                <SadFace c="#ff5a5a" />
              </g>
            </svg>
            <p className="absolute left-[3px] top-px flex items-center gap-[3px] whitespace-pre text-[6px] leading-[9px] text-[#111]">
              <svg viewBox="0 0 4 3" className="h-[3px] w-[5px]" aria-hidden="true"><path d="M0 3h4L2 0z" /></svg>
              XAUUSDgmp,H4  1958.47 1958.89 1955.43 1956.11
            </p>
            <QuotePanel />
            <p className="absolute right-[2px] top-px flex items-center gap-px text-[6px] leading-[9px] text-[#111]">
              Exp Assistant 4
              <svg viewBox="0 0 10 10" className="h-[9px] w-[9px]" aria-hidden="true"><SadFace c="#222" /></svg>
            </p>
            <p className="absolute left-1 top-[443px] text-[6px] leading-[8px] text-[#1d3a30]">#82579603 buy 0.01</p>
            <p className="absolute left-1 top-[470px] text-[6px] leading-[8px] text-[#1d3a30]">#82587583 buy limit 0.01</p>
            <span className="absolute right-[51px] top-[446px] bg-[#47505b] pl-[10px] pr-[7px] text-[8px] leading-3 text-[#d8dde2]">($)</span>
          </div>
          <ol className="flex h-[15px] overflow-hidden text-[6px] leading-none text-[#222]">
            {DATES.map((d, i) => (
              <li key={d} className={`shrink-0 whitespace-nowrap ${i % 3 === 2 ? "w-[42px]" : "w-[43px]"}`}>
                <span className="block h-1 w-px bg-[#333]" />
                {d}
              </li>
            ))}
          </ol>
        </div>
        <div className="relative w-[30px] pt-[10px] text-[6px] text-[#222]">
          <ol>
            {PRICES.map((p) => (
              <li key={p} className="flex h-[22px] items-center gap-[2px] leading-none">
                {p && <span className="h-px w-[2px] bg-[#333]" />}
                {p}
              </li>
            ))}
          </ol>
          <span className="absolute left-0 top-[454px] w-[28px] bg-black pl-[3px] leading-[10px] text-white">1956.11</span>
        </div>
      </div>
      <div className="flex h-[15px] items-start border-t border-[#555] bg-[#f0f0f0] pl-[2px] text-[8px] leading-[9px] text-[#8a8a8a]">
        {["XAUUSDgmp,H1", "XAUUSDgmp,M5", "XAUUSDgmp,H1"].map((t, i) => (
          <button key={i} type="button" className={`mt-[2px] pl-[7px] pr-2 ${i < 2 ? "border-r border-[#999]" : ""}`}>
            {t}
          </button>
        ))}
        <button type="button" className="-mt-px h-[13px] border-x border-b border-[#333] bg-white px-[7px] leading-[12px] text-black">
          XAUUSDgmp,H4
        </button>
        <span className="ml-auto flex gap-[8px] pr-[3px] text-[#777]">
          <button type="button" aria-label="Previous tabs">‹</button>
          <button type="button" aria-label="Next tabs">›</button>
        </span>
      </div>
    </section>
  );
}

/* ---------- terminal ---------- */

const HEADS = ["Order", "Time", "Type", "Size", "Symbol", "Price", "S / L", "T / P", "Price", "Commission", "Swap", "Profit"];
const COLS = [
  "w-[123px]", "w-[174px]", "w-[87px]", "w-[67px]", "w-[87px]", "w-[96px]", "w-[97px]", "w-[97px]", "w-[97px]", "w-[97px]", "w-[97px]", "",
];
const TERMINAL_TABS = [
  ["Exposure"], ["Account History"], ["News", "40"], ["Alerts"], ["Mailbox", "7"], ["Market", "118"], ["Signals"], ["Articles"],
  ["Code Base"], ["Experts"], ["Journal"],
];

function OrderRow({ selected, id, icon, cells, profit }) {
  const line = selected ? "border-[#6fb2e4]" : "border-[#dcdcdc]";
  return (
    <tr className={`h-[13px] border-b border-[#d0d0d0] ${selected ? "bg-[#0f7bcf] text-[#e3f1fb]" : "bg-white text-[#222]"}`}>
      <td className={`border-r pl-[2px] ${NUM} ${line}`}>
        <span className="flex items-center gap-[4px]">
          {icon}
          {id}
        </span>
      </td>
      {cells.map((c, i) => (
        <td key={i} className={`border-r pr-[2px] text-right ${line} ${/^\d/.test(c) ? NUM : ""}`}>
          {c}
        </td>
      ))}
      <td className={`pr-[6px] text-right ${NUM}`}>
        <span className="inline-flex items-center gap-[7px]">
          {profit}
          <button type="button" aria-label={`Close order ${id}`} className="flex">
            <svg viewBox="0 0 5 5" className="h-[5px] w-[5px]" aria-hidden="true">
              <path d="M0 0l5 5M5 0L0 5" stroke={selected ? "#9cc6e8" : "#999"} strokeWidth=".9" />
            </svg>
          </button>
        </span>
      </td>
    </tr>
  );
}

const PageIcon = ({ dot }) => (
  <Svg s={9}>
    <path d="M1.500.5h4l2 2v6h-6z" fill="#fff" stroke="#86a3b8" />
    <circle cx="6.500" cy="6.500" r="2" fill={dot} />
  </Svg>
);

function Terminal() {
  return (
    <section className="mt-px flex h-[88px] border-t border-[#b0b0b0] bg-[#f0f0f0]">
      <div className="flex w-[10px] flex-col items-center justify-between bg-gradient-to-t from-[#c3d3e3] to-[#eef1f4] pb-[3px]">
        <CloseX label="Close terminal" />
        <h2 className="rotate-180 text-[8px] leading-[10px] [writing-mode:vertical-rl]">Terminal</h2>
      </div>
      <div className="flex min-w-0 flex-1 flex-col">
        <div className="h-[71px] border-l border-[#8a8a8a] bg-white">
          <table className="w-full table-fixed border-collapse text-[8px] leading-none">
            <colgroup>
              {COLS.map((c, i) => (
                <col key={i} className={c} />
              ))}
            </colgroup>
            <thead>
              <tr className="h-[13px] border-b border-[#aaa] bg-[#f3f3f3] text-[#333]">
                {HEADS.map((h, i) => (
                  <th key={i} className={`border-r border-[#666] font-normal ${i ? "pr-[3px] text-right" : "pl-[4px] text-left"}`}>
                    {h}
                  </th>
                ))}
              </tr>
            </thead>
            <tbody>
              <OrderRow
                selected
                id="82579603"
                icon={<PageIcon dot="#cfe6f7" />}
                cells={["2023.05.18 17:37:28", "buy", "0.01", "xauusdgmp", "1958.20", "0.00", "0.00", "1956.11", "", ""]}
                profit="-2.09"
              />
              <tr className="h-[14px] bg-[#c8c8c8] font-bold text-[#111]">
                <td colSpan={11} className="pl-[2px]">
                  <span className="flex items-center gap-[4px] whitespace-pre">
                    <Svg s={9}>
                      <rect x=".5" y=".5" width="8" height="8" fill="#f5e9e4" stroke="#8e7b74" />
                      <path d="M4.500 1.500L7 5H5v2H4V5H2z" fill="#c0301d" />
                    </Svg>
                    Balance: 105.65 USD  Equity: 103.56  Margin: 3.92  Free margin: 99.64  Margin level: 2644.27%
                  </span>
                </td>
                <td className="pr-[18px] text-right">-2.09</td>
              </tr>
              <OrderRow
                id="82587583"
                icon={<PageIcon dot="#2a86a8" />}
                cells={["2023.05.18 18:12:51", "buy limit", "0.01", "xauusdgmp", "1950.76", "0.00", "0.00", "1956.36", "", ""]}
                profit=""
              />
            </tbody>
          </table>
        </div>
        <div className="flex flex-1 items-start border-t border-[#444] text-[8px] leading-[9px] text-[#8a8a8a]">
          <button type="button" className="-mt-px h-[14px] border-x border-b border-[#333] bg-white px-[6px] leading-[12px] text-black">
            Trade
          </button>
          {TERMINAL_TABS.map(([t, n]) => (
            <button key={t} type="button" className="mt-[2px] flex h-[9px] border-r border-[#999] pl-[6px] pr-[5px]">
              {t}
              {n && <span className="pl-px pt-[3px] text-[6px] font-bold leading-[8px] text-[#cf2f4a]">{n}</span>}
            </button>
          ))}
        </div>
      </div>
    </section>
  );
}

function StatusBar() {
  return (
    <footer className="flex h-[16px] items-center border-t border-[#d0d0d0] bg-[#f0f0f0] text-[8px] leading-none text-[#222]">
      <span className="flex-1">For Help, press F1</span>
      <span className="flex h-3 w-[78px] items-center border-l border-[#c4c4c4] pl-[3px]">Default</span>
      <span className="h-3 w-[68px] border-l border-[#c4c4c4]" />
      <span className="h-3 w-[47px] border-l border-[#c4c4c4]" />
      <span className="h-3 w-[47px] border-l border-[#c4c4c4]" />
      <span className="h-3 w-[46px] border-l border-[#c4c4c4]" />
      <span className="h-3 w-[46px] border-l border-[#c4c4c4]" />
      <span className="h-3 w-[44px] border-l border-[#c4c4c4]" />
      <span className="flex h-3 w-[86px] items-center gap-[2px] border-l border-[#8fb08f] pl-[3px]">
        <svg viewBox="0 0 16 8" className="h-2 w-4" aria-hidden="true">
          <rect width="16" height="8" fill="#4f7391" />
          <path d="M0 0h16v1L7 5 0 8z" fill="#86ad54" />
          <path d="M0 8l5-3 4-1 7-4" fill="none" stroke="#e6efcf" />
        </svg>
        1680/2 kb
      </span>
    </footer>
  );
}

/* ---------- taskbar ---------- */

const Speaker = () => (
  <Svg>
    <path d="M1 4.500h2L6 2v8L3 7.500H1z" fill="none" stroke="#e6e6e6" strokeWidth=".9" />
    <path d="M7.500 4.500q1 1.500 0 3M9 3q2 3 0 6M10.500 2q2.500 4 0 8" fill="none" stroke="#e6e6e6" strokeWidth=".8" />
  </Svg>
);

const APPS = [
  ["Start", false,
    <Svg key="i" s={18}><path d="M1 1h7.500v7.500H1zM9.500 1H17v7.500H9.500zM1 9.500h7.500V17H1zM9.500 9.500H17V17H9.500z" fill="#45c1f2" /></Svg>],
  ["Task View", false,
    <Svg key="i" s={18}><rect x="6" y="2" width="11" height="11" fill="#e9e9e9" /><rect x="2" y="5" width="10" height="11" fill="#777" opacity=".85" /></Svg>],
  ["File Explorer", false,
    <Svg key="i" s={18}><path d="M1 3h6l1.500 2H17v11H1z" fill="#f0b429" /><path d="M1 6h16v10H1z" fill="#fbd75b" /><rect x="5" y="11" width="8" height="5" fill="#3b8ed0" /></Svg>],
  ["Chrome", true,
    <Svg key="i" s={18}>
      <circle cx="9" cy="9" r="8" fill="#e5463a" />
      <path d="M9 9L2.100 5A8 8 0 009 17z" fill="#3aa757" />
      <path d="M9 17a8 8 0 006.900-12H9z" fill="#fbcc34" />
      <circle cx="9" cy="9" r="3.900" fill="#fff" />
      <circle cx="9" cy="9" r="3" fill="#3f82ee" />
    </Svg>],
  ["Mail", true,
    <span key="i" className="relative">
      <Svg s={18}><path d="M2 9l6-5 3 3 5-4-2 8-6 5-3-3z" fill="#2e8bd8" /><path d="M4 9l5 5 6-7-3-1-3 4-2-3z" fill="#7cc0ee" /></Svg>
      <span className="absolute -right-[3px] -top-[3px] h-[10px] w-[10px] rounded-full bg-[#f2a7ad] text-center text-[7px] font-bold leading-[10px] text-[#5a1118]">1</span>
    </span>],
  ["Steam", true,
    <span key="i" className="flex h-4 w-4 items-center justify-center rounded-full bg-[#143050]"><FaSteamSymbol className="h-[14px] w-[14px] text-white" /></span>],
  ["WinRAR", true,
    <Svg key="i" s={18}>
      <rect x="1" y="1" width="16" height="5" fill="#8c2f7b" /><rect x="1" y="6.500" width="16" height="5" fill="#3b62b5" />
      <rect x="1" y="12" width="16" height="5" fill="#3f8d45" /><rect x="6" y="1" width="6" height="16" fill="#d89b2b" />
      <path d="M2 2l4 3M16 2l-4 3M2 8l4 2M16 8l-4 2" stroke="#e4514a" strokeWidth="1.500" /><rect x="7.500" y="6" width="3" height="6" fill="#fff2c0" stroke="#7b3f0c" />
    </Svg>],
  ["MetaTrader", true,
    <Svg key="i" s={18}><circle cx="9" cy="9" r="6.500" fill="#2ba4dc" /><path d="M5 7q4-4 7 0M5 10h8M7 13h5" fill="none" stroke="#a7e1f8" strokeWidth="1.300" /></Svg>],
  ["Monitor", true,
    <Svg key="i" s={18}><rect x="1" y="3" width="16" height="12" fill="#7fd3ee" stroke="#3c9cc0" /><circle cx="6" cy="8" r="3" fill="#2c6f90" /><path d="M3 13h5M11 6h4M11 9h4M10 13l2-3 3 3" stroke="#245c78" fill="none" /></Svg>],
];

function Taskbar() {
  return (
    <div className="flex h-8 items-center bg-[#202020] text-[8px] text-[#e8e8e8]">
      <div className="flex w-1/3 items-center gap-1 pl-3">
        <Svg s={18}>
          <circle cx="12" cy="6" r="4.500" fill="#f0963a" />
          <path d="M4 16a3.500 3.500 0 010-7 4.500 4.500 0 018.500-1A4 4 0 0114 16z" fill="#c9dcf4" />
        </Svg>
        <div className="leading-[10px]">
          <p>31°C</p>
          <p className="text-[#c8c8c8]">มีเมฆส่วนใหญ่</p>
        </div>
      </div>
      <div className="flex w-1/3 items-center justify-center pb-px">
        {APPS.map(([name, running, icon]) => (
          <button key={name} type="button" aria-label={name} className="flex h-7 w-[29px] flex-col items-center justify-end gap-px">
            {icon}
            <span className={`h-[2px] w-[4px] rounded-full ${running ? "bg-[#9a9a9a]" : ""}`} />
          </button>
        ))}
      </div>
      <div className="flex w-1/3 items-center justify-end pr-2">
        <button type="button" aria-label="Show hidden icons" className="mr-[6px] flex h-[28px] w-[19px] items-center justify-center rounded-[3px] bg-[#2e2e2e]">
          <Svg s={8}><path d="M1 2.500l3 3 3-3" fill="none" stroke="#eee" strokeWidth="1.200" /></Svg>
        </button>
        <button type="button" aria-label="Sound" className="mr-[9px] flex"><Speaker /></button>
        <button type="button" aria-label="Discord" className="relative mr-[10px] flex">
          <FaDiscord className="h-3 w-3 text-white" />
          <span className="absolute -right-px -top-px h-1 w-1 rounded-full bg-[#e8404c]" />
        </button>
        <button type="button" aria-label="Microphone" className="mr-[11px] flex">
          <Svg>
            <rect x="4.500" y="1" width="3" height="6" rx="1.500" fill="none" stroke="#e6e6e6" />
            <path d="M2.500 6q0 3 3.500 3t3.500-3M6 9v2.500" fill="none" stroke="#e6e6e6" strokeWidth=".9" />
          </Svg>
        </button>
        <span className="mr-[10px]">ENG</span>
        <button type="button" aria-label="Network" className="mr-[3px] flex">
          <Svg>
            <path d="M7 2H1v6.500h8V7M3 10.500h5M9 1h2.500v3H9zM10.200 4v3" fill="none" stroke="#e6e6e6" />
          </Svg>
        </button>
        <button type="button" aria-label="Volume" className="flex"><Speaker /></button>
        <div className="w-[56px] text-right leading-[10px]">
          <p>1:48:56 AM</p>
          <p>5/19/2023</p>
        </div>
      </div>
    </div>
  );
}

/* ---------- overlays ---------- */

const TRAY = [
  <Svg key="a"><rect x="1" y="1" width="10" height="10" rx="1" fill="#f3c6cf" /><path d="M2 4h8v6H2z" fill="#c23a55" /><path d="M3 2v3M9 2v3" stroke="#7b3a48" /></Svg>,
  <Svg key="b"><path d="M6 1.500L10.500 6 6 10.500 1.500 6z" fill="none" stroke="#6b6f72" strokeWidth="1.300" /></Svg>,
  <Svg key="c"><rect x="1" y="1" width="10" height="10" rx="1" fill="#fff" /><path d="M6 2L2.500 8l1.500 2L7 4z" fill="#2da35b" /><path d="M6 2l4 6H7z" fill="#f4c33b" /><path d="M4 10l1-2.500h5L9 10z" fill="#3e7de0" /></Svg>,
  <Svg key="d"><rect x="1" y="1" width="10" height="10" rx="1" fill="#e07a22" /><path d="M4 10V5M6 8l3-5M7 9l3-2" stroke="#fbe3c6" strokeWidth="1.200" /></Svg>,
  <Svg key="e"><rect x="1" y="1" width="10" height="10" rx="2" fill="#f4f8fc" /><ellipse cx="6" cy="6.500" rx="3.500" ry="2.500" fill="#3a9be6" /></Svg>,
  <Svg key="f"><rect x="1" y="1" width="10" height="10" rx="1" fill="#15240b" /><path d="M2.500 6q2-2.500 5-1.500v3q-3 1-5-1.500z" fill="none" stroke="#76b900" strokeWidth=".8" /><path d="M6 3.500h3.500v5H6" fill="none" stroke="#5f9408" strokeWidth=".8" /></Svg>,
  <Svg key="g"><rect x="0" y="0" width="12" height="12" rx="1" fill="#0c0c0c" /><path d="M1.500 10V7M3.500 10V4M6 10V2M8.500 10V4M10.500 10V6" stroke="#fff" strokeWidth="1.300" /></Svg>,
  <Svg key="h"><path d="M4.500 1h3v3h-3zM3.500 4h5v6.500h-5z" fill="none" stroke="#dcdcdc" /><path d="M8 9l1.500 1.500L12 7.500" fill="none" stroke="#dcdcdc" /></Svg>,
  <span key="i" className="flex h-3 w-[9px] items-center justify-center rounded-full bg-[#1976d2]"><FaBluetoothB className="h-2 w-2 text-white" /></span>,
  <Svg key="j"><rect x="1" y="2.500" width="10" height="7" rx="1" fill="#f2f2f2" /><path d="M3 4.500l2 1.500-2 1.500z" fill="#222" /><path d="M7 5h3M7 7h3" stroke="#222" /></Svg>,
  <Svg key="k"><rect x="1" y="1" width="10" height="10" rx="1" fill="#1fbb3b" /><ellipse cx="5.500" cy="5.500" rx="3.500" ry="2.700" fill="#fff" /><rect x="7" y="7" width="4" height="4" rx="1" fill="#d9433d" /></Svg>,
  <Svg key="l"><rect x="1" y="1" width="10" height="10" rx="2" fill="#d5dce3" /><path d="M3.500 3L6 6l2.500-3M6 6v3.500" fill="none" stroke="#5d6c7b" strokeWidth="1.200" /></Svg>,
  <Svg key="m"><rect x="1" y="1" width="10" height="10" fill="#3ba86b" /><path d="M6 1h5v5z" fill="#e7c33d" /><path d="M1 6v5h5z" fill="#2e6fb8" /><path d="M3.500 6l2 2 4-4.500" fill="none" stroke="#fff" strokeWidth="1.500" /></Svg>,
  <FaSteamSymbol key="n" className="h-3 w-3 rounded-full bg-[#12304c] text-[#dce6ee]" />,
  <Svg key="o"><circle cx="8" cy="3" r="2" fill="#7b83eb" /><rect x="1" y="3.500" width="6" height="6" rx="1" fill="#4b53bc" /><path d="M2.500 5h3M4 5v3.500" stroke="#fff" /><rect x="7" y="5.500" width="4" height="4" rx="1" fill="#6a72d8" /><circle cx="9.500" cy="9.500" r="1.800" fill="#b8dca4" /></Svg>,
  <Svg key="p"><circle cx="6" cy="5" r="3.500" fill="none" stroke="#2cb1a0" strokeWidth="1.300" /><circle cx="6" cy="5" r="1.300" fill="#2cb1a0" /><path d="M1 10.500h10" stroke="#2cb1a0" strokeWidth="1.300" /></Svg>,
  <Svg key="q"><path d="M1 11Q3 3 11 1q0 7-7 8z" fill="#a77ed6" /><path d="M1 11L8 4" stroke="#4f3673" strokeWidth=".8" /></Svg>,
  <Svg key="r"><rect x="1" y="1" width="10" height="10" fill="#23b3a6" /><path d="M1 3h10" stroke="#bff0ea" /><path d="M3 6h6M3 8h6" stroke="#8be0d8" strokeDasharray="1.500 1" /></Svg>,
  <Svg key="s"><path d="M1.500 2L6 11l4.500-9H8L6 6.500 4 2z" fill="#b81f35" /><path d="M4.500 2h3" stroke="#7c1424" /></Svg>,
  <Svg key="t"><path d="M1 1h7v7H1z" fill="none" stroke="#bcbcbc" /><path d="M3.500 3.500H11V11H3.500z" fill="#2c2f31" stroke="#e4e4e4" /></Svg>,
  <Svg key="u"><circle cx="6" cy="6" r="5.500" fill="#2b2770" /><path d="M4 4.500h1.500L4.500 7M7 4.500h1.500L7.500 7" fill="none" stroke="#fff" strokeWidth="1.200" /></Svg>,
  <Svg key="v"><path d="M1 8a3 3 0 012-5 3 3 0 015 0L6 8z" fill="#d7d7d7" /><circle cx="8.500" cy="8.500" r="3.200" fill="#d2213b" /><path d="M7.300 7.300l2.400 2.400M9.700 7.300L7.300 9.700" stroke="#fff" /></Svg>,
];

function Tray() {
  return (
    <div className="absolute bottom-[41px] right-[131px] grid h-[138px] w-[138px] grid-cols-5 grid-rows-5 rounded-md bg-[radial-gradient(circle_at_55%_40%,#17384f,#2a3236_60%,#303030_95%)] p-[3px] shadow-[0_0_3px_#0008]">
      {TRAY.map((icon, i) => (
        <button key={i} type="button" aria-label={`Tray app ${i + 1}`} className="flex items-center justify-center">
          {icon}
        </button>
      ))}
    </div>
  );
}

function ContextMenu() {
  const item = "flex h-10 w-full items-center pl-[25px] pr-4 text-left";
  return (
    <div className="absolute bottom-[170px] right-[102px] w-[161px] overflow-hidden rounded bg-[#2b2b2b] pb-px text-[9px] text-[#e2e2e2] shadow-[0_0_3px_#000a]">
      <button type="button" className="flex h-[43px] w-full items-center justify-between bg-[#404040] pl-[25px] pr-[17px] pt-[2px]">
        Settings
        <svg viewBox="0 0 6 10" className="h-[9px] w-[6px]" aria-hidden="true">
          <path d="M1 1l4 4-4 4" fill="none" stroke="#cfcfcf" />
        </svg>
      </button>
      <hr className="mx-[7px] mb-[3px] mt-[2px] border-[#5a5a5a]" />
      {["Enable anchors", "Untop all windows", "Un-PiP all windows", "Minimize all windows", "Minimize all shrunk windows"].map((t) => (
        <button key={t} type="button" className={`${item} whitespace-nowrap`}>
          {t}
        </button>
      ))}
      <hr className="mx-[7px] mb-[3px] mt-[2px] border-[#5a5a5a]" />
      <button type="button" className={item}>Exit</button>
    </div>
  );
}

export default function App() {
  return (
    <div className="relative flex min-h-screen flex-col overflow-hidden bg-black font-['Open_Sans','Noto_Sans','Noto_Sans_Thai',sans-serif]">
      <div className="flex flex-1 flex-col border-x border-black bg-[#f0f0f0] font-['Roboto','Open_Sans',sans-serif]">
        <TitleBar />
        <MenuBar />
        <Toolbar />
        <Timeframes />
        <main className="flex flex-1">
          <aside className="w-[170px] shrink-0 border-r border-[#d0d0d0]">
            <MarketWatch />
            <Navigator />
          </aside>
          <Chart />
        </main>
        <Terminal />
        <StatusBar />
      </div>
      <Taskbar />
      <Tray />
      <ContextMenu />
      <svg viewBox="0 0 8 12" className="pointer-events-none absolute bottom-[420px] right-[198px] h-3 w-2" aria-hidden="true">
        <path d="M.5.500v10l2.300-2 1.500 3 1.500-.8-1.400-2.900h3z" fill="#fff" stroke="#222" strokeWidth=".5" />
      </svg>
    </div>
  );
}
